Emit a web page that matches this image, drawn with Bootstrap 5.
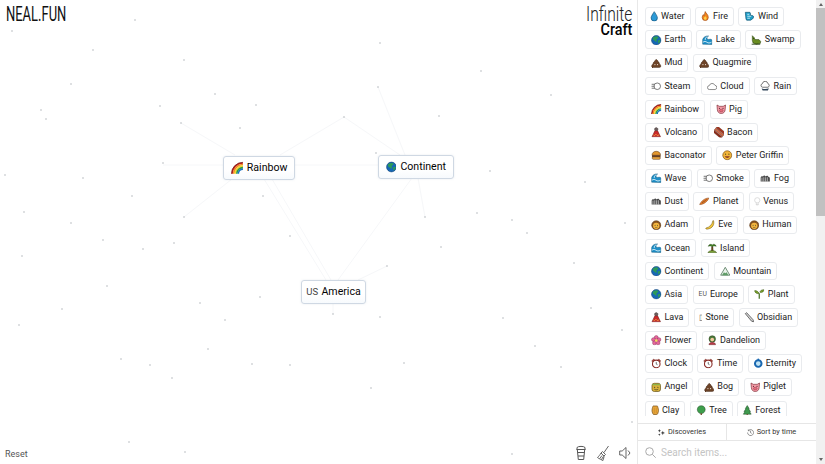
<!DOCTYPE html>
<html lang="en">
<head>
<meta charset="utf-8">
<title>Infinite Craft</title>
<link href="https://cdn.jsdelivr.net/npm/bootstrap@5.3.0/dist/css/bootstrap.min.css" rel="stylesheet">
<style>
html,body{height:100%;overflow:hidden;background:#fff}
body{font-family:Roboto,"Liberation Sans",sans-serif;color:#040404}
.game-shell{height:464px;width:825px}
.play-area{width:637px;position:relative}
.sky{position:absolute;left:0;top:0;width:637px;height:464px}
.site-logo{font-size:19.5px;line-height:20px;font-weight:400;margin:5px 0 0 6px;transform:scaleX(.665);transform-origin:0 0;color:#111;white-space:nowrap;width:92px;position:relative}
.brand-block{position:absolute;right:5px;top:5.3px;text-align:right}
.brand-light{font-size:20px;font-weight:300;line-height:19px;color:#222;transform:scaleX(.78);transform-origin:100% 0}
.brand-bold{font-size:16px;font-weight:500;line-height:13px;margin-top:-1.6px;transform:scaleX(.9);transform-origin:100% 0}
.chip-float{position:absolute;font-size:10.6px;font-weight:400;height:23.5px;padding:0 6.5px;gap:4px;border:1px solid #cfd8e3;border-radius:3px;background:linear-gradient(180deg,#fff 60%,#f7fafd);box-shadow:0 0 2px rgba(150,170,190,.25)}
.chip-float svg{width:14px;height:14px}
.at-rainbow{left:223px;top:156px;width:72px}
.at-continent{left:378px;top:155px;width:75.5px}
.at-america{left:301px;top:280px;width:65px;gap:3px}
.flag-code{font-size:9.500px;color:#444;letter-spacing:.2px}
.reset-link{position:absolute;left:5px;top:448px;font-size:9px;line-height:12px;color:#555}
.tool-row{position:absolute;left:575px;top:445px;gap:10px}
.tool-row svg{width:12px;height:16px}
.side-panel{width:179px;border-left:1px solid #e8e8e8}
.item-list{height:416px;overflow:hidden;padding:7.3px 12px 0 7px;gap:4.5px 4.5px;align-content:flex-start}
.item-chip{height:18.65px;padding:0 5px;gap:3px;font-size:9px;line-height:1;border:1px solid #e9ebee;border-radius:3px;background:#fff;color:#222;white-space:nowrap}
.item-chip svg{width:10.5px;height:10.5px;flex:none}
.item-chip svg.trim-water{margin:0 -1.750px}
.item-chip svg.trim-venus{margin:0 -2.600px}
.item-chip svg.trim-clay{margin:0 -1.250px}
.item-chip svg.trim-some{margin:0 -.750px}
.code-glyph{font-size:6.800px;color:#555}
.code-box{font-size:7.500px;color:#555;width:3px;overflow:hidden;margin-left:-.500px}
.mode-bar{height:18px;margin-top:7px;border-top:1px solid #e6e6e6;border-bottom:1px solid #e6e6e6;font-size:7.4px;color:#333}
.mode-left{width:89px;border-right:1px solid #e6e6e6;gap:3px}
.mode-right{width:89px;gap:3px}
.mode-bar svg{width:7px;height:7px}
.search-row{height:23px;padding-left:7px;gap:5px;font-size:10px;color:#c4c4c4}
.search-row svg{width:11px;height:11px}
.scroll-rail{width:9px;background:#f1f1f1;position:relative}
.scroll-thumb{height:208px;margin-top:8px;background:#c1c1c1}
.rail-up,.rail-down{position:absolute;left:2.5px;width:0;height:0;border-left:2px solid transparent;border-right:2px solid transparent}
.rail-up{top:3px;border-bottom:3px solid #666}
.rail-down{bottom:3px;border-top:3px solid #666}
</style>
</head>
<body>
<svg width="0" height="0" class="position-absolute">
<defs>
<symbol id="e-water" viewBox="0 0 16 16"><path d="M8 1C8 1 3.2 7.5 3.2 10.5a4.8 4.8 0 0 0 9.6 0C12.800 7.500 8 1 8 1z" fill="#2c9ad6" stroke="#0f4f78"/></symbol>
<symbol id="e-fire" viewBox="0 0 16 16"><path d="M8 .8c1 3 4.700 4.500 4.700 9a4.700 4.700 0 0 1-9.400 0c0-2 1-3.200 1.800-4.300.3 1 .8 1.500 1.300 1.500C7 5 7 3 8 .8z" fill="#f2851c" stroke="#8a3a10" stroke-width=".8"/><path d="M8 8c1.200 1 2 2 2 3.300a2 2 0 0 1-4 0C6 10 7.200 9.200 8 8z" fill="#fcd34a"/></symbol>
<symbol id="e-wind" viewBox="0 0 16 16"><path d="M2 2h7l1 2v3h3c2 0 2 4 0 5l-3 2H4l-1-2z" fill="#1f9fc9" stroke="#0e4f6d"/><path d="M5 5h3M5 8h6M5 11h4" stroke="#e6f7fb" stroke-width="1.200"/></symbol>
<symbol id="e-earth" viewBox="0 0 16 16"><circle cx="8" cy="8" r="7.200" fill="#1667b6" stroke="#0c3d72" stroke-width=".8"/><path d="M3.500 3.500C6 2 9 1.500 11 3c.5 1.500-1 2.500-2.500 3-.5 1.500 1 3-.5 4.500C6 9.500 5 8 3.500 7.500 2.500 6 2.500 5 3.500 3.500zM11 8c1.500-.5 3-.5 3.500.5-.5 2.500-2 4-3.500 4.500-.5-1.500-1-3.500 0-5z" fill="#2d9a58"/></symbol>
<symbol id="e-wave" viewBox="0 0 16 16"><path d="M1 14V7C2 3 6 1 10 1.500c-2 1-3 3-2 4.500 1 1.200 3 .5 5 .5 1 0 2 .5 2 1.500v6.500z" fill="#1e8fc7" stroke="#0e4f74" stroke-width=".7"/><path d="M1.500 11c2-1.500 4-1.500 6 0s4 1.500 7 0" stroke="#e6f7fb" stroke-width="1.300" fill="none"/><path d="M8 2.500c-2 1-3.500 3-3 5" stroke="#e6f7fb" stroke-width="1.200" fill="none"/></symbol>
<symbol id="e-swamp" viewBox="0 0 16 16"><path d="M2 1l3 3 1 3 6 0 3 3-1 3-6 1-5-2-1-4z" fill="#6b8e23" stroke="#27400f" stroke-width=".8"/><path d="M1 14h13" stroke="#27400f" stroke-width="1.300"/><circle cx="4" cy="5" r="1" fill="#27400f"/></symbol>
<symbol id="e-poop" viewBox="0 0 16 16"><path d="M8 2c.6 1 3 2 2.800 3.500C12.500 6.500 13 8.500 12.800 9c1.800.7 2.200 2.500 2.200 3.500 0 1.200-1 1.800-2.500 1.800h-9C2 14.300 1 13.700 1 12.500 1 11.500 1.500 9.700 3.200 9 3 8 3.800 6.300 5.200 5.500 5 4 7 3.500 8 2z" fill="#6e4428" stroke="#3c2414" stroke-width=".7"/><circle cx="6" cy="10" r=".9" fill="#f3e9dc"/><circle cx="10" cy="10" r=".9" fill="#f3e9dc"/></symbol>
<symbol id="e-steam" viewBox="0 0 16 16"><circle cx="9.500" cy="8" r="5" fill="#fff" stroke="#666" stroke-width="1.300"/><path d="M1 5h5M.8 8h5M1 11h5" stroke="#777" stroke-width="1.500"/></symbol>
<symbol id="e-cloud" viewBox="0 0 16 16"><path d="M4 13a3 3 0 0 1-.5-6A4.500 4.500 0 0 1 12 6.500 3.300 3.300 0 0 1 12.300 13z" fill="#fff" stroke="#555" stroke-width="1"/></symbol>
<symbol id="e-rain" viewBox="0 0 16 16"><path d="M4 9.500a2.800 2.800 0 0 1-.3-5.500A4.200 4.200 0 0 1 12 4a2.900 2.900 0 0 1 .2 5.500z" fill="#fff" stroke="#333"/><path d="M2.500 11c3 1.500 8 1.500 11 0l-1.500 3.500H4z" fill="#33475b"/></symbol>
<symbol id="e-rainbow" viewBox="0 0 16 16"><g fill="none" stroke-width="2.100"><path d="M1.500 15.500A14 14 0 0 1 15.500 1.500" stroke="#c5221f"/><path d="M3.500 15.500A12 12 0 0 1 15.500 3.500" stroke="#ee8a1d"/><path d="M5.500 15.500A10 10 0 0 1 15.500 5.500" stroke="#f6d32d"/><path d="M7.500 15.500A8 8 0 0 1 15.500 7.500" stroke="#2f9e44"/><path d="M9.500 15.500A6 6 0 0 1 15.500 9.500" stroke="#1971c2"/></g><path d="M.6 15.500A14.900 14.900 0 0 1 15.500.6" fill="none" stroke="#5a1810" stroke-width=".8"/></symbol>
<symbol id="e-pig" viewBox="0 0 16 16"><path d="M1.500 1.500L5 3.500h6l3.500-2L14 8c0 4-2.500 6.500-6 6.500S2 12 2 8z" fill="#f49aa6" stroke="#7c2d36"/><ellipse cx="8" cy="10" rx="2.800" ry="2" fill="#e56b7c" stroke="#7c2d36" stroke-width=".6"/><circle cx="5.300" cy="6.500" r=".9" fill="#3a1a1e"/><circle cx="10.700" cy="6.500" r=".9" fill="#3a1a1e"/></symbol>
<symbol id="e-volcano" viewBox="0 0 16 16"><path d="M6 5.500h4l4.500 9.500h-13z" fill="#c92a2a" stroke="#5e0f0f" stroke-width=".7"/><path d="M6.300 1.500c-1.500 1-1 3.500 0 4h3.400c1-.5 1.500-3 0-4a2.500 2.500 0 0 0-3.400 0z" fill="#6b5d5d" stroke="#3d3232" stroke-width=".6"/><path d="M3.500 12l2 1 2-2 2 2 3-1" stroke="#fcbf49" stroke-width="1" fill="none"/></symbol>
<symbol id="e-bacon" viewBox="0 0 16 16"><g transform="rotate(40 8 8)"><rect x="0" y="2.500" width="16" height="3.200" fill="#a3341f" stroke="#541708" stroke-width=".6"/><rect x="0" y="6.500" width="16" height="3.200" fill="#d06a48" stroke="#541708" stroke-width=".6"/><rect x="0" y="10.500" width="16" height="3.200" fill="#8a2a18" stroke="#541708" stroke-width=".6"/></g></symbol>
<symbol id="e-burger" viewBox="0 0 16 16"><path d="M1.500 8C1.500 4 4.500 2 8 2s6.500 2 6.500 6z" fill="#e2962e" stroke="#5a3410" stroke-width=".8"/><rect x="1.500" y="8" width="13" height="2.500" fill="#5b2f12"/><path d="M2 10.500h12V13c0 .8-.7 1.200-1.500 1.200h-9C2.700 14.200 2 13.800 2 13z" fill="#eda842" stroke="#5a3410" stroke-width=".8"/></symbol>
<symbol id="e-face" viewBox="0 0 16 16"><circle cx="8" cy="8" r="6.800" fill="#f2b53a" stroke="#7a4d10"/><circle cx="5.500" cy="6.300" r=".9" fill="#442"/><circle cx="10.500" cy="6.300" r=".9" fill="#442"/><path d="M4 9.500c2 3.500 6 3.500 8 0z" fill="#8a3a20"/></symbol>
<symbol id="e-fog" viewBox="0 0 16 16"><path d="M1 13V7.500C1 5.500 3 4.500 4.500 5.500 5.500 3.500 7.500 3.500 8.500 5.200 10 3.500 12.500 4 13 6c1.500 0 2 1 2 2v5z" fill="#4a4a4a"/><path d="M3 7v6M5.800 6.500V13M8.500 6.500V13M11.200 6.500V13" stroke="#eee" stroke-width=".9"/></symbol>
<symbol id="e-planet" viewBox="0 0 16 16"><path d="M1 13C3 8 9 3 15 3c-1 4-7 10-14 10z" fill="#e77f2e" stroke="#7a3a10" stroke-width=".7"/><path d="M4.500 10.500c2.500-1.500 5-3.500 7.500-5.500" stroke="#8a4a1a" stroke-width="1"/></symbol>
<symbol id="e-venus" viewBox="0 0 16 16"><circle cx="8" cy="6.500" r="4" fill="#fff" stroke="#ccc"/><path d="M6.500 11v2.500h3V11" fill="#f3f3f3" stroke="#bbb" stroke-width=".8"/></symbol>
<symbol id="e-adam" viewBox="0 0 16 16"><circle cx="8" cy="8" r="7" fill="#8a5520" stroke="#4a2a0c" stroke-width=".7"/><circle cx="8" cy="8.800" r="4.800" fill="#f4b63e"/><circle cx="6.200" cy="8" r=".8" fill="#443"/><circle cx="9.800" cy="8" r=".8" fill="#443"/><path d="M6 10.800c1 1 3 1 4 0" stroke="#443" stroke-width=".8" fill="none"/></symbol>
<symbol id="e-banana" viewBox="0 0 16 16"><path d="M13 1c1.500 5-.5 12-10 13-1.500 0-2.500-1-1.500-1.800C7 11 11 7 12 1z" fill="#f4c83c" stroke="#6d5410" stroke-width=".8"/></symbol>
<symbol id="e-island" viewBox="0 0 16 16"><path d="M2 5c1-3 4-4 6-2 2-2 5-1 6 2-2-.8-4-.8-5 0l-.5 1H7.500L7 5C6 4.200 4 4.200 2 5z" fill="#4a8a2a" stroke="#1f3f10" stroke-width=".7"/><path d="M7 6h2l.5 6h-3z" fill="#6e4a20" stroke="#33210c" stroke-width=".5"/><path d="M1.500 15c0-2 3-3.500 6.500-3.500s6.500 1.500 6.500 3.500z" fill="#7fa63a" stroke="#2e4212" stroke-width=".7"/></symbol>
<symbol id="e-mount" viewBox="0 0 16 16"><path d="M8 2l7 12H1z" fill="#e9f2ea" stroke="#2f5c3a"/><path d="M3.200 14L6 9.500l2 1.500 2-1.500 2.800 4.500z" fill="#5e9c66"/></symbol>
<symbol id="e-plant" viewBox="0 0 16 16"><path d="M8 15V7" stroke="#3f6a1a" stroke-width="1.800"/><path d="M8 7C6 3 3 2 1 2.500c0 3 3 5 7 4.500zM9 5c0-2 2-4 6-4 0 3-2 5-6 4z" fill="#7da52a" stroke="#2f4a10" stroke-width=".7"/></symbol>
<symbol id="e-flower" viewBox="0 0 16 16"><g fill="#e5679a" stroke="#7c2450" stroke-width=".6"><circle cx="8" cy="3.800" r="3"/><circle cx="3.800" cy="7" r="3"/><circle cx="12.200" cy="7" r="3"/><circle cx="5.300" cy="12" r="3"/><circle cx="10.700" cy="12" r="3"/></g><circle cx="8" cy="8.300" r="2" fill="#f6d85a"/></symbol>
<symbol id="e-dandelion" viewBox="0 0 16 16"><circle cx="8" cy="6" r="5" fill="#4c7a3a" stroke="#1f3814" stroke-width=".7"/><circle cx="8" cy="7" r="2.800" fill="#f2c9a0"/><path d="M3 15c0-2.500 2-4 5-4s5 1.500 5 4z" fill="#b93a46" stroke="#4e1218" stroke-width=".6"/></symbol>
<symbol id="e-clock" viewBox="0 0 16 16"><circle cx="8" cy="9" r="5.800" fill="#fff" stroke="#8a2f2a" stroke-width="1.700"/><path d="M8 6v3.300l2 1" stroke="#333" fill="none"/><path d="M1 4.500L4 1.500l1.800 1.500L2.500 6zM15 4.500L12 1.500l-1.800 1.500L13.500 6z" fill="#a8423a" stroke="#551a16" stroke-width=".5"/></symbol>
<symbol id="e-ring" viewBox="0 0 16 16"><circle cx="8" cy="8.500" r="5" fill="#bfe3f5" stroke="#1967b0" stroke-width="3"/><circle cx="8" cy="2" r="1.300" fill="#1967b0"/></symbol>
<symbol id="e-angel" viewBox="0 0 16 16"><rect x="1.500" y="2" width="13" height="12.500" rx="3.500" fill="#d8b13a" stroke="#5c4a10"/><path d="M2 4h12" stroke="#8bb34a" stroke-width="2"/><circle cx="5.500" cy="8" r=".9" fill="#332"/><circle cx="10.500" cy="8" r=".9" fill="#332"/><path d="M5 11c2 1.200 4 1.200 6 0" stroke="#332" fill="none"/></symbol>
<symbol id="e-clay" viewBox="0 0 16 16"><path d="M5 1.500h6c.5 0 1 1 1 2 1 3 1.500 6 0 9-.5 1.500-1 2-2 2H6c-1 0-1.500-.5-2-2-1.500-3-1-6 0-9 0-1 .5-2 1-2z" fill="#eaa83c" stroke="#6d4510"/><path d="M6.500 4v9M9.500 4v9" stroke="#b87a20" stroke-width=".8"/></symbol>
<symbol id="e-tree" viewBox="0 0 16 16"><path d="M8 1c3.500 0 6 2.500 6 6s-2.500 6-6 6-6-2.500-6-6 2.500-6 6-6z" fill="#3e9e4c" stroke="#15421c" stroke-width=".7"/><rect x="7" y="12.500" width="2" height="2.800" fill="#6b4524"/></symbol>
<symbol id="e-pine" viewBox="0 0 16 16"><path d="M8 .8L11 5.500H9.800L13 10h-1.500L14 14H2l2.500-4H3L6.200 5.500H5z" fill="#3f9a4e" stroke="#15421c" stroke-width=".7"/><rect x="7" y="14" width="2" height="1.800" fill="#6b4524"/></symbol>
<symbol id="e-obsidian" viewBox="0 0 16 16"><path d="M2 2.500L4 1l10 11 .5 3-3-1z" fill="#d5d5d5" stroke="#333" stroke-width="1"/></symbol>
</defs>
</svg>

<div class="d-flex game-shell">
  <div class="play-area">
    <svg class="sky" viewBox="0 0 637 464" aria-hidden="true">
      <path fill="none" stroke="#f6f7f9" stroke-width="1" d="M235 155L181 123M223 165H163M232 179L184 217M280 155L344 117M295 165H378M264 179L326 280M272 179L331 280M400 155L344 117M405 155L378 87M418 178L425 217M412 178L338 280M358 280L387 266M333 303V314"/>
      <path fill="none" stroke="#adb1b6" stroke-width="1.500" stroke-linecap="round" d="M135 20h0M12 31h0M93 50h0M184 60h0M71 84h0M215 94h0M256 105h0M160 106h0M41 110h0M46 119h0M181 123h0M240 128h0M163 163h0M5 175h0M83 178h0M132 196h0M263 196h0M24 212h0M184 217h0M71 223h0M290 236h0M103 240h0M174 243h0M143 249h0M22 256h0M380 43h0M481 71h0M551 95h0M378 87h0M344 117h0M439 116h0M376 153h0M490 171h0M585 182h0M425 217h0M477 213h0M512 220h0M527 233h0M625 223h0M441 247h0M107 286h0M62 309h0M19 325h0M200 303h0M260 297h0M225 320h0M208 349h0M121 359h0M150 365h0M172 378h0M252 364h0M290 365h0M129 442h0M185 452h0M387 266h0M574 263h0M591 308h0M622 330h0M333 314h0M380 317h0M503 318h0M535 346h0M561 367h0M404 363h0M371 388h0M632 422h0M512 454h0"/>
    </svg>
    <div class="site-logo">NEAL.FUN</div>
    <div class="brand-block">
      <div class="brand-light">Infinite</div>
      <div class="brand-bold">Craft</div>
    </div>
    <div class="chip-float at-rainbow d-flex align-items-center justify-content-center"><svg><use href="#e-rainbow"/></svg><span>Rainbow</span></div>
    <div class="chip-float at-continent d-flex align-items-center justify-content-center"><svg><use href="#e-earth"/></svg><span>Continent</span></div>
    <div class="chip-float at-america d-flex align-items-center justify-content-center"><span class="flag-code">US</span><span>America</span></div>
    <div class="reset-link">Reset</div>
    <div class="tool-row position-absolute d-flex align-items-center">
      <svg viewBox="0 0 12 16" fill="none" stroke="#555" stroke-width="1"><path d="M2 2.500C3 1 9 1 10 2.500v2H2zM1.500 4.500h9M2.300 4.500l1 10h5.400l1-10M2.700 7.500h6.600M3 11h6"/></svg>
      <svg viewBox="0 0 12 16" fill="none" stroke="#555" stroke-width=".9"><path d="M11.500 1L7 7.500M5.500 6.500l3 3-1.500 1.500L4 8zM4 8c-1 2-2.500 3.500-3.500 4.500 2 1.500 4.500 2.500 5.500 3 .5-1.500 1-3.500 1-4.500M2.800 13.500L5 10.500M4.500 14.500L6.300 11.500"/></svg>
      <svg viewBox="0 0 12 16" fill="none" stroke="#555" stroke-width=".9"><path d="M.7 6h2.500L7 2.500v11L3.200 10H.7zM9 5.500L11 8l-2 2.500"/></svg>
    </div>
  </div>

  <div class="side-panel d-flex flex-column">
    <div class="item-list d-flex flex-wrap">
      <div class="item-chip d-flex align-items-center"><svg class="trim-water"><use href="#e-water"/></svg>Water</div>
      <div class="item-chip d-flex align-items-center"><svg class="trim-some"><use href="#e-fire"/></svg>Fire</div>
      <div class="item-chip d-flex align-items-center"><svg><use href="#e-wind"/></svg>Wind</div>
      <div class="item-chip d-flex align-items-center"><svg><use href="#e-earth"/></svg>Earth</div>
      <div class="item-chip d-flex align-items-center"><svg><use href="#e-wave"/></svg>Lake</div>
      <div class="item-chip d-flex align-items-center"><svg><use href="#e-swamp"/></svg>Swamp</div>
      <div class="item-chip d-flex align-items-center"><svg><use href="#e-poop"/></svg>Mud</div>
      <div class="item-chip d-flex align-items-center"><svg><use href="#e-poop"/></svg>Quagmire</div>
      <div class="item-chip d-flex align-items-center"><svg><use href="#e-steam"/></svg>Steam</div>
      <div class="item-chip d-flex align-items-center"><svg><use href="#e-cloud"/></svg>Cloud</div>
      <div class="item-chip d-flex align-items-center"><svg><use href="#e-rain"/></svg>Rain</div>
      <div class="item-chip d-flex align-items-center"><svg><use href="#e-rainbow"/></svg>Rainbow</div>
      <div class="item-chip d-flex align-items-center"><svg><use href="#e-pig"/></svg>Pig</div>
      <div class="item-chip d-flex align-items-center"><svg><use href="#e-volcano"/></svg>Volcano</div>
      <div class="item-chip d-flex align-items-center"><svg><use href="#e-bacon"/></svg>Bacon</div>
      <div class="item-chip d-flex align-items-center"><svg><use href="#e-burger"/></svg>Baconator</div>
      <div class="item-chip d-flex align-items-center"><svg><use href="#e-face"/></svg>Peter Griffin</div>
      <div class="item-chip d-flex align-items-center"><svg><use href="#e-wave"/></svg>Wave</div>
      <div class="item-chip d-flex align-items-center"><svg><use href="#e-steam"/></svg>Smoke</div>
      <div class="item-chip d-flex align-items-center"><svg><use href="#e-fog"/></svg>Fog</div>
      <div class="item-chip d-flex align-items-center"><svg><use href="#e-fog"/></svg>Dust</div>
      <div class="item-chip d-flex align-items-center"><svg><use href="#e-planet"/></svg>Planet</div>
      <div class="item-chip d-flex align-items-center"><svg class="trim-venus"><use href="#e-venus"/></svg>Venus</div>
      <div class="item-chip d-flex align-items-center"><svg><use href="#e-adam"/></svg>Adam</div>
      <div class="item-chip d-flex align-items-center"><svg><use href="#e-banana"/></svg>Eve</div>
      <div class="item-chip d-flex align-items-center"><svg><use href="#e-adam"/></svg>Human</div>
      <div class="item-chip d-flex align-items-center"><svg><use href="#e-wave"/></svg>Ocean</div>
      <div class="item-chip d-flex align-items-center"><svg><use href="#e-island"/></svg>Island</div>
      <div class="item-chip d-flex align-items-center"><svg><use href="#e-earth"/></svg>Continent</div>
      <div class="item-chip d-flex align-items-center"><svg><use href="#e-mount"/></svg>Mountain</div>
      <div class="item-chip d-flex align-items-center"><svg><use href="#e-earth"/></svg>Asia</div>
      <div class="item-chip d-flex align-items-center"><span class="code-glyph">EU</span>Europe</div>
      <div class="item-chip d-flex align-items-center"><svg><use href="#e-plant"/></svg>Plant</div>
      <div class="item-chip d-flex align-items-center"><svg><use href="#e-volcano"/></svg>Lava</div>
      <div class="item-chip d-flex align-items-center"><span class="code-box">▯</span>Stone</div>
      <div class="item-chip d-flex align-items-center"><svg class="trim-some"><use href="#e-obsidian"/></svg>Obsidian</div>
      <div class="item-chip d-flex align-items-center"><svg><use href="#e-flower"/></svg>Flower</div>
      <div class="item-chip d-flex align-items-center"><svg class="trim-some"><use href="#e-dandelion"/></svg>Dandelion</div>
      <div class="item-chip d-flex align-items-center"><svg><use href="#e-clock"/></svg>Clock</div>
      <div class="item-chip d-flex align-items-center"><svg><use href="#e-clock"/></svg>Time</div>
      <div class="item-chip d-flex align-items-center"><svg class="trim-some"><use href="#e-ring"/></svg>Eternity</div>
      <div class="item-chip d-flex align-items-center"><svg><use href="#e-angel"/></svg>Angel</div>
      <div class="item-chip d-flex align-items-center"><svg><use href="#e-poop"/></svg>Bog</div>
      <div class="item-chip d-flex align-items-center"><svg><use href="#e-pig"/></svg>Piglet</div>
      <div class="item-chip d-flex align-items-center"><svg class="trim-clay"><use href="#e-clay"/></svg>Clay</div>
      <div class="item-chip d-flex align-items-center"><svg><use href="#e-tree"/></svg>Tree</div>
      <div class="item-chip d-flex align-items-center"><svg class="trim-some"><use href="#e-pine"/></svg>Forest</div>
    </div>
    <div class="mode-bar d-flex">
      <div class="mode-left d-flex align-items-center justify-content-center"><svg viewBox="0 0 8 8"><path d="M1.500 0l.5 1.500L3.500 2 2 2.500 1.500 4 1 2.500 0 2l1-.5zM1.500 5l.4 1.100L3 6.500l-1.100.4L1.500 8l-.4-1.100L0 6.500l1.100-.4zM5.500 2l.6 1.800L8 4.500l-1.900.7L5.500 7l-.6-1.800L3 4.500l1.900-.7z" fill="#333"/></svg>Discoveries</div>
      <div class="mode-right d-flex align-items-center justify-content-center"><svg viewBox="0 0 8 8" fill="none" stroke="#555" stroke-width=".7"><path d="M1.600 1.800A3.400 3.400 0 1 1 .7 4M1.500 .5v1.500H3M4 2v2.200l1.400.8"/></svg>Sort by time</div>
    </div>
    <div class="search-row d-flex align-items-center">
      <svg viewBox="0 0 11 11" fill="none" stroke="#aaa" stroke-width="1"><circle cx="4.500" cy="4.500" r="3.800"/><path d="M7.300 7.300L10.700 10.700"/></svg>
      <span>Search items...</span>
    </div>
  </div>
  <div class="scroll-rail">
    <div class="rail-up"></div>
    <div class="scroll-thumb"></div>
    <div class="rail-down"></div>
  </div>
</div>
<script src="https://cdn.jsdelivr.net/npm/bootstrap@5.3.0/dist/js/bootstrap.bundle.min.js"></script>
</body>
</html>
